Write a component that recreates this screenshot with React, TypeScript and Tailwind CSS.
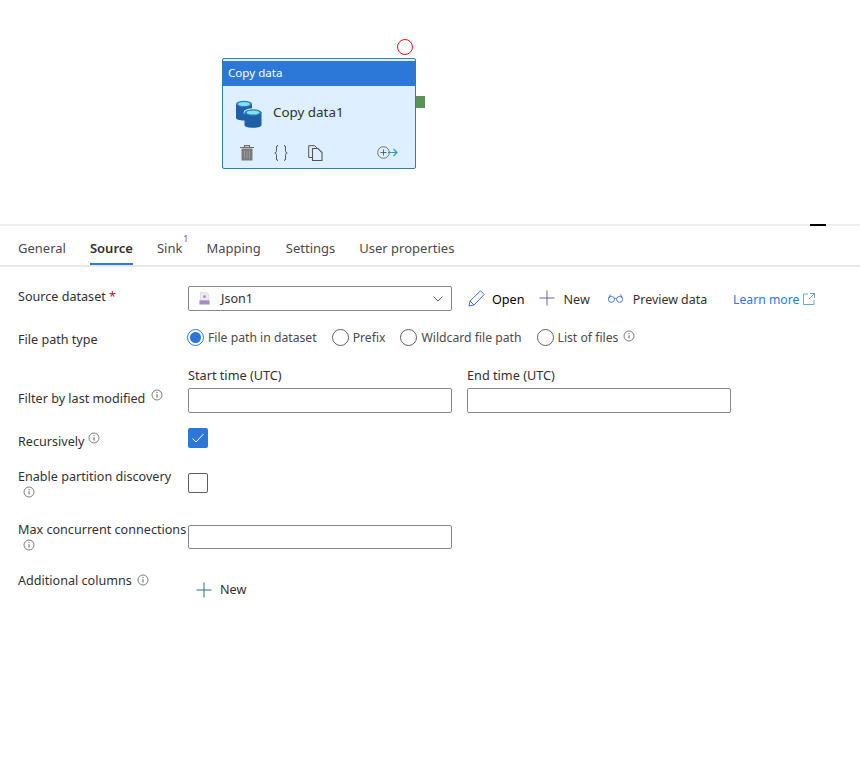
import React from "react";

function Info({ className = "" }: { className?: string }) {
  return (
    <svg viewBox="0 0 12 12" className={"w-[12px] h-[12px] shrink-0 " + className}>
      <circle cx="6" cy="6" r="5" fill="none" stroke="#605e5c" strokeWidth="0.8" />
      <path d="M6 5.2v3.2" stroke="#605e5c" strokeWidth="1" />
      <circle cx="6" cy="3.6" r="0.6" fill="#605e5c" />
    </svg>
  );
}

function Radio({ label, checked = false }: { label: string; checked?: boolean }) {
  return (
    <div className="flex items-center gap-[4px]">
      <div className={"w-[17px] h-[17px] rounded-full border flex items-center justify-center " + (checked ? "border-[#2b78d8]" : "border-[#605e5c]")}>
        {checked && <div className="w-[11px] h-[11px] rounded-full bg-[#2b78d8]" />}
      </div>
      <span>{label}</span>
    </div>
  );
}

function Plus({ color }: { color: string }) {
  return (
    <svg viewBox="0 0 16 16" className="w-[16px] h-[16px]">
      <path d="M8 .5v15M.5 8h15" stroke={color} strokeWidth="1" fill="none" />
    </svg>
  );
}

function Node() {
  return (
    <div className="absolute left-[222px] top-[58px] w-[194px] h-[111px] rounded-[2px] border border-[#2f80a8] bg-[#deefff]">
      <div className="h-[25px] mt-[2px] bg-[#2b78d8] text-white text-[11.600px] leading-[24px] pl-[5px]">Copy data</div>
      <div className="flex items-center mt-[11px] pl-[13px] gap-[11px] h-[32px]">
        <svg viewBox="0 0 26 28" className="w-[26px] h-[28px] mt-[1px]">
          <path d="M0 4v14c0 1.500 3.500 2.500 8 2.500s8-1 8-2.500V4z" fill="#1f5fa8" />
          <ellipse cx="8" cy="4" rx="8" ry="3.200" fill="#2a7cc4" />
          <ellipse cx="8" cy="4" rx="6" ry="2" fill="#7fe0ee" />
          <ellipse cx="17" cy="12.500" rx="9.500" ry="4.200" fill="#deefff" />
          <path d="M8.500 12v13c0 1.800 3.800 2.800 8.500 2.800s8.500-1 8.500-2.800V12z" fill="#1f5fa8" />
          <ellipse cx="17" cy="12.500" rx="8.500" ry="3.300" fill="#2a7cc4" />
          <ellipse cx="17" cy="12.500" rx="6.500" ry="2" fill="#7fe0ee" />
        </svg>
        <span className="text-[13.400px] text-[#323130] -mt-[1px]">Copy data1</span>
      </div>
      <div className="relative flex items-center h-[20px] mt-[14px] pl-[17px]">
        <svg viewBox="0 0 14 16" className="w-[14px] h-[16px]">
          <path d="M0 2.500h14M4.500 2.500V.7h5v1.800" stroke="#6e6e6e" strokeWidth="1.200" fill="none" />
          <rect x="1.500" y="3.500" width="11" height="12" fill="#7a7a7a" />
          <path d="M4.500 5.500v8M7 5.500v8M9.500 5.500v8" stroke="#a5a5a5" strokeWidth="0.800" />
        </svg>
        <svg viewBox="0 0 14 16" className="ml-[20px] w-[14px] h-[16px]">
          <path d="M4 .5C2 .5 2.500 3 2.500 5.500 2.500 7 2 8 .8 8c1.200 0 1.700 1 1.700 2.500C2.500 13 2 15.500 4 15.500M10 .5c2 0 1.500 2.500 1.500 5 0 1.500.5 2.500 1.700 2.500-1.200 0-1.700 1-1.700 2.500 0 2.500.5 5-1.500 5" fill="none" stroke="#4a4a4a" strokeWidth="1" />
        </svg>
        <svg viewBox="0 0 15 16" className="ml-[20px] w-[15px] h-[16px]">
          <path d="M4 12.500H.7V.7h6l2.300 2.300" stroke="#555" strokeWidth="1" fill="none" />
          <path d="M4.500 3.500h5.500l4 4v8H4.500z" fill="#deefff" stroke="#555" strokeWidth="1.100" />
        </svg>
        <svg viewBox="0 0 21 13" className="absolute left-[154px] top-[3px] w-[21px] h-[13px]">
          <circle cx="6.500" cy="6.500" r="5.800" fill="none" stroke="#666" strokeWidth="0.900" />
          <path d="M6.500 3.500v6M3.500 6.500h6" stroke="#555" strokeWidth="0.900" />
          <path d="M11 6.500h9M16.500 3l3.500 3.500L16.500 10" stroke="#2a9bd0" strokeWidth="1.100" fill="none" />
        </svg>
      </div>
    </div>
  );
}

function Tab({ label, active = false, sup }: { label: string; active?: boolean; sup?: string }) {
  return (
    <div className={"relative h-[40px] pt-[9px] flex items-center border-b-2 " + (active ? "border-[#2b78d8] font-semibold text-[#323130]" : "border-transparent text-[#4a4a4a]")}>
      {label}
      {sup && <span className="absolute right-[-6px] top-[9px] text-[9px] leading-none text-[#8a3f9e]">{sup}</span>}
    </div>
  );
}

export default function App() {
  const input = "h-[25px] w-[264px] border border-[#8a8886] rounded-[2px] bg-white";
  return (
    <div className="relative w-[860px] h-[758px] bg-white text-[#323130] text-[12.600px] overflow-hidden" style={{ fontFamily: '"Noto Sans", sans-serif' }}>
      <div className="relative h-[226px] border-b-2 border-[#eeeeee]">
        <div className="absolute left-[397px] top-[39px] w-[16px] h-[16px] rounded-full border border-[#f01010] bg-white" />
        <div className="absolute left-[416px] top-[96px] w-[9px] h-[12px] bg-[#5b9357]" />
        <Node />
        <div className="absolute left-[810px] top-[224px] w-[16px] h-[2px] bg-black" />
      </div>

      <div className="flex gap-[24px] h-[40px] pl-[18px] border-b-2 border-[#e6e6e6] text-[13px] box-content -mt-[1px]">
        <Tab label="General" />
        <Tab label="Source" active />
        <Tab label="Sink" sup="1" />
        <Tab label="Mapping" />
        <div className="ml-[1px]"><Tab label="Settings" /></div>
        <Tab label="User properties" />
      </div>

      <div className="pl-[18px]">
        <div className="flex items-center mt-[19px] h-[25px]">
          <div className="w-[170px] -mt-[3px]">Source dataset <span className="text-[#a4262c]">*</span></div>
          <div className={input + " flex items-center pl-[10px] pr-[8px]"}>
            <svg viewBox="0 0 11 14" className="w-[11px] h-[13px]">
              <path d="M1 0h6.500L10 2.500V9H1z" fill="#ececec" stroke="#c8c8c8" strokeWidth="0.500" />
              <circle cx="5.500" cy="5" r="1.500" fill="#a58cc8" />
              <rect x="0" y="9" width="11" height="4.500" fill="#a68ec4" />
            </svg>
            <span className="ml-[11px] flex-1 mt-[1px]">Json1</span>
            <svg viewBox="0 0 10 6" className="w-[10px] h-[6px]"><path d="M.5.5 5 5 9.500.5" stroke="#605e5c" fill="none" /></svg>
          </div>
          <svg viewBox="0 0 17 17" className="ml-[16px] w-[17px] h-[17px] -mt-[1px]">
            <path d="M1 16l1-5L12.500 .8l3.700 3.700L6 15z M2 11l4 4" fill="none" stroke="#3f6fd8" strokeWidth="1" />
          </svg>
          <span className="ml-[7px] mt-[3px] text-black">Open</span>
          <div className="ml-[15px] -mt-[2px]"><Plus color="#6264a7" /></div>
          <span className="ml-[8px] mt-[3px]">New</span>
          <svg viewBox="0 0 17 11" className="ml-[17px] w-[17px] h-[10px] -mt-[2px]">
            <circle cx="4" cy="7" r="3.300" fill="none" stroke="#3f6fd8" strokeWidth="1" />
            <circle cx="13" cy="7" r="3.300" fill="none" stroke="#3f6fd8" strokeWidth="1" />
            <path d="M7 6.500q1.500-1 3 0M1 5.500 3 1.500M16 5.500 14 1.500" fill="none" stroke="#3f6fd8" strokeWidth="1" />
          </svg>
          <span className="ml-[9px] mt-[3px] text-[12.400px]">Preview data</span>
          <span className="ml-[26px] mt-[3px] text-[12.200px] text-[#2b78d8]">Learn more</span>
          <svg viewBox="0 0 12 12" className="ml-[4px] w-[12px] h-[12px]">
            <path d="M5 1H.5v10.500H11V7M7 .5h4.500V5M11.500 .5 6 6" fill="none" stroke="#5b9bd5" strokeWidth="0.900" />
          </svg>
        </div>

        <div className="flex items-center mt-[15px] h-[24px]">
          <div className="w-[169px] mt-[4px]">File path type</div>
          <div className="flex items-center gap-[15px] text-[12.200px] text-[#4a4a4a]">
            <Radio label="File path in dataset" checked />
            <Radio label="Prefix" />
            <Radio label="Wildcard file path" />
            <div className="flex items-center gap-[5px]">
              <Radio label="List of files" />
              <Info className="-mt-[3px]" />
            </div>
          </div>
        </div>

        <div className="flex items-end mt-[16px]">
          <div className="w-[170px] flex items-center gap-[6px] mb-[4px]">Filter by last modified <Info className="-mt-[9px]" /></div>
          <div>
            <div className="h-[22px] leading-[18px] text-[12.700px]">Start time (UTC)</div>
            <div className={input} />
          </div>
          <div className="ml-[15px]">
            <div className="h-[22px] leading-[18px] text-[12.700px]">End time (UTC)</div>
            <div className={input} />
          </div>
        </div>

        <div className="flex items-center mt-[15px] h-[20px]">
          <div className="w-[170px] flex items-center gap-[4px] mt-[8px]">Recursively <Info className="-mt-[9px]" /></div>
          <div className="w-[20px] h-[20px] rounded-[2px] bg-[#2b78d8] flex items-center justify-center">
            <svg viewBox="0 0 12 10" className="w-[12px] h-[10px]"><path d="M.5 5.500 4 9l7.500-8" stroke="white" strokeWidth="1" fill="none" /></svg>
          </div>
        </div>

        <div className="flex items-center mt-[21px] h-[32px]">
          <div className="w-[170px] self-start -mt-[2px]">
            <div className="leading-[19px]">Enable partition discovery</div>
            <Info className="ml-[5px]" />
          </div>
          <div className="w-[20px] h-[20px] -mt-[5px] rounded-[2px] border border-[#605e5c] bg-white" />
        </div>

        <div className="flex mt-[24px]">
          <div className="w-[170px] shrink-0 whitespace-nowrap -mt-[5px]">
            <div className="leading-[19px]">Max concurrent connections</div>
            <Info className="ml-[5px]" />
          </div>
          <div className="h-[24px] w-[264px] border border-[#8a8886] rounded-[2px] bg-white" />
        </div>

        <div className="flex mt-[14px]">
          <div className="w-[170px] flex items-center gap-[5px] h-[19px] mt-[7px]">Additional columns <Info className="-mt-[4px]" /></div>
          <div className="flex items-center gap-[8px] ml-[8px] mt-[16px] h-[18px]">
            <Plus color="#2f6f7f" />
            <span>New</span>
          </div>
        </div>
      </div>
    </div>
  );
}
